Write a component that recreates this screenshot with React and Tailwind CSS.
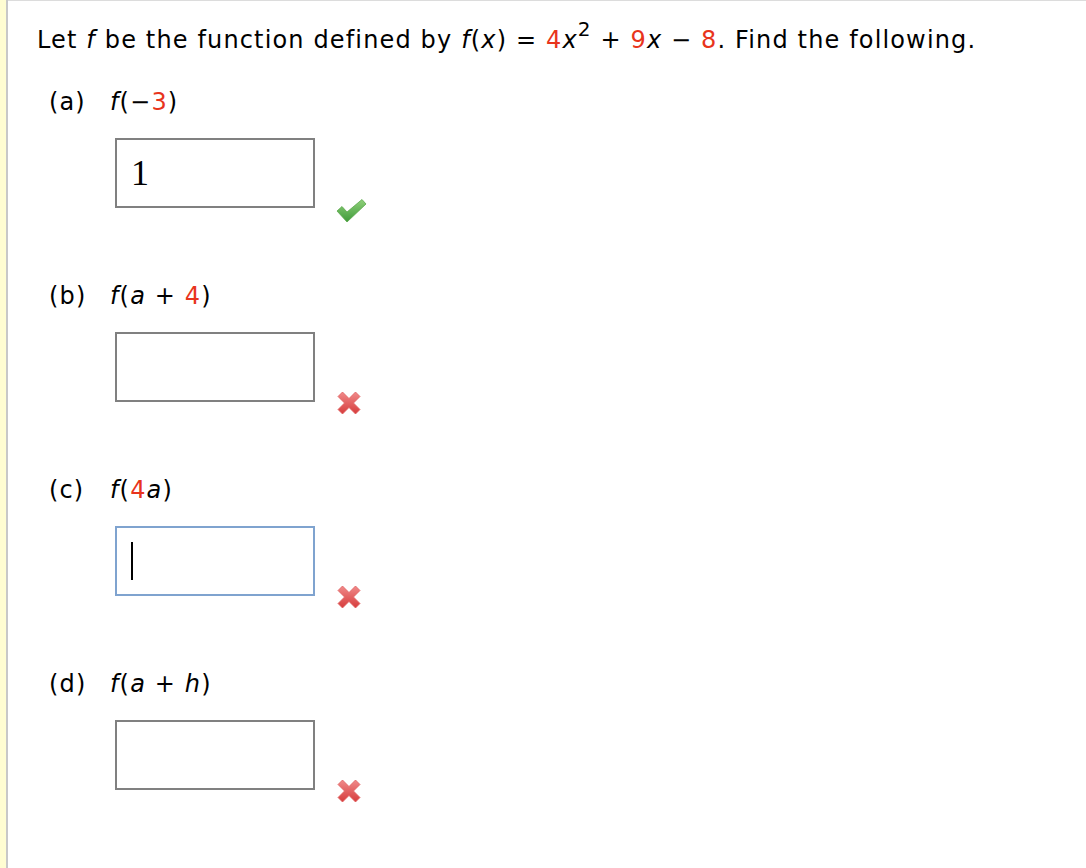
import { useState } from 'react';

const red = 'text-[#e8341c]';

const Check = () => (
  <svg width="32" height="26" viewBox="0 0 32 26" className="self-end mb-[-16px]">
    <defs>
      <linearGradient id="ck" x1="0" y1="0" x2="0" y2="1">
        <stop offset="0" stopColor="#8fd07a" />
        <stop offset="1" stopColor="#3f9a3a" />
      </linearGradient>
    </defs>
    <path d="M2 13 L7 8.5 L12 14 L27 1.5 L31 6 L12 24 Z" fill="url(#ck)" stroke="#5aa84a" strokeWidth="0.8" strokeLinejoin="round" />
  </svg>
);

const Cross = () => (
  <svg width="28" height="26" viewBox="0 0 28 26" className="self-end mb-[-14px]">
    <defs>
      <linearGradient id="cx" x1="0" y1="0" x2="0" y2="1">
        <stop offset="0" stopColor="#f08a8a" />
        <stop offset="1" stopColor="#d63c3c" />
      </linearGradient>
    </defs>
    <path
      d="M3 6.5 L7.5 2 L14 8.5 L20.5 2 L25 6.5 L18.5 13 L25 19.5 L20.5 24 L14 17.5 L7.5 24 L3 19.5 L9.5 13 Z"
      fill="url(#cx)"
      stroke="#e06060"
      strokeWidth="0.8"
      strokeLinejoin="round"
    />
  </svg>
);

const Part = ({ label, expr, value, focused, correct }) => (
  <div className="flex flex-col">
    <div className="flex items-center h-[30px] pl-[41px]">
      <span className="w-[61px]">{label}</span>
      <span>{expr}</span>
    </div>
    <div className="flex items-start gap-[20px] ml-[107px] mt-[21px] mb-[73px]">
      <div
        className={`w-[200px] h-[70px] bg-white flex items-center pl-[14px] ${
          focused ? 'border-2 border-[#7fa3cf]' : 'border-2 border-[#808080]'
        }`}
      >
        {value && (
          <span className="font-['Liberation_Serif',serif] text-[36px] tracking-normal text-black leading-none">{value}</span>
        )}
        {focused && <span className="w-[2px] h-[38px] bg-black" />}
      </div>
      <div className="h-[70px] flex">{correct ? <Check /> : <Cross />}</div>
    </div>
  </div>
);

export default function App() {
  const [parts] = useState([
    {
      label: '(a)',
      expr: (
        <>
          <i>f</i>(−<span className={red}>3</span>)
        </>
      ),
      value: '1',
      correct: true,
    },
    {
      label: '(b)',
      expr: (
        <>
          <i>f</i>(<i>a</i> + <span className={red}>4</span>)
        </>
      ),
    },
    {
      label: '(c)',
      expr: (
        <>
          <i>f</i>(<span className={red}>4</span>
          <i>a</i>)
        </>
      ),
      focused: true,
    },
    {
      label: '(d)',
      expr: (
        <>
          <i>f</i>(<i>a</i> + <i>h</i>)
        </>
      ),
    },
  ]);

  return (
    <div className="w-[1086px] h-[868px] bg-white flex overflow-hidden font-['DejaVu_Sans',Verdana,sans-serif] text-[24px] tracking-[1.15px] text-black">
      <div className="w-[6px] bg-[#fffdd2]" />
      <div className="w-[2px] bg-[#c8c8c8]" />
      <div className="flex-1 border-t border-[#dcdcdc]">
        <div className="pl-[29px] pt-[22px] h-[34px] flex items-center box-content">
          <span>
            Let <i>f</i> be the function defined by <i>f</i>(<i>x</i>) = <span className={red}>4</span>
            <i>x</i>
            <sup className="text-[20px] top-[-0.6em]">2</sup> + <span className={red}>9</span>
            <i>x</i> − <span className={red}>8</span>. Find the following.
          </span>
        </div>
        <div className="mt-[30px]">
          {parts.map((p, i) => (
            <Part key={i} {...p} />
          ))}
        </div>
      </div>
    </div>
  );
}
